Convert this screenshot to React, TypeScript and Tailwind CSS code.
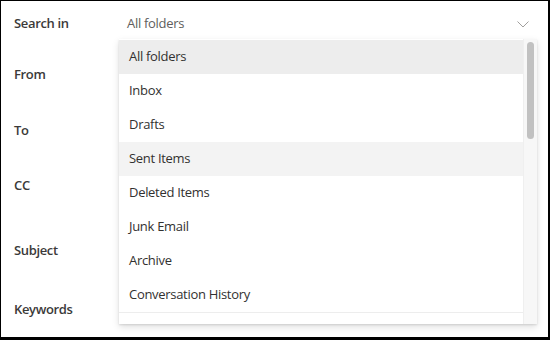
import React from "react";

const labels: { text: string; h: string }[] = [
  { text: "Search in", h: "h-[46px]" },
  { text: "From", h: "h-[56px]" },
  { text: "To", h: "h-[56px]" },
  { text: "CC", h: "h-[54px]" },
  { text: "Subject", h: "h-[76px]" },
  { text: "Keywords", h: "h-[42px]" },
];

const items: { text: string; cls: string }[] = [
  { text: "All folders", cls: "bg-[#ededed]" },
  { text: "Inbox", cls: "" },
  { text: "Drafts", cls: "" },
  { text: "Sent Items", cls: "bg-[#f3f3f3]" },
  { text: "Deleted Items", cls: "" },
  { text: "Junk Email", cls: "" },
  { text: "Archive", cls: "" },
  { text: "Conversation History", cls: "" },
];

export default function App() {
  return (
    <div className="relative w-[550px] h-[340px] bg-white border-t border-l border-r-2 border-b-[3px] border-black font-['Open_Sans',sans-serif] text-[#323130]">
      <div className="flex">
        <div className="w-[112px] flex flex-col pl-[13px]">
          {labels.map((l) => (
            <div key={l.text} className={`${l.h} flex items-center text-[13px] font-semibold tracking-[-0.35px] text-[#3b3a39]`}>
              {l.text}
            </div>
          ))}
        </div>
        <div className="flex-1">
          <div className="h-[46px] flex items-center justify-between pl-[14px] pr-[19px]">
            <span className="text-[13px] tracking-[-0.3px] text-[#605e5c]">All folders</span>
            <svg width="12" height="7" viewBox="0 0 12 7" fill="none">
              <polyline points="0.5,0.5 6,6 11.5,0.5" stroke="#a19f9d" strokeWidth="1" />
            </svg>
          </div>
        </div>
      </div>
      <div className="absolute left-[118px] top-[38px] w-[418px] h-[285px] bg-white flex shadow-[0_3.2px_7.2px_rgba(0,0,0,0.13),0_0.6px_1.8px_rgba(0,0,0,0.11)]">
        <div className="w-[404px] pt-[1px] flex flex-col">
          {items.map((it) => (
            <div key={it.text} className={`h-[34px] shrink-0 flex items-center pl-[10px] text-[13px] tracking-[-0.3px] ${it.cls}`}>
              {it.text}
            </div>
          ))}
          <div className="h-px bg-[#ededed]" />
        </div>
        <div className="w-[14px] bg-[#f7f7f7] border-l border-[#efefef] pt-[3px] pl-[3px]">
          <div className="w-[7px] h-[97px] rounded-full bg-[#c1c1c1]" />
        </div>
      </div>
    </div>
  );
}
